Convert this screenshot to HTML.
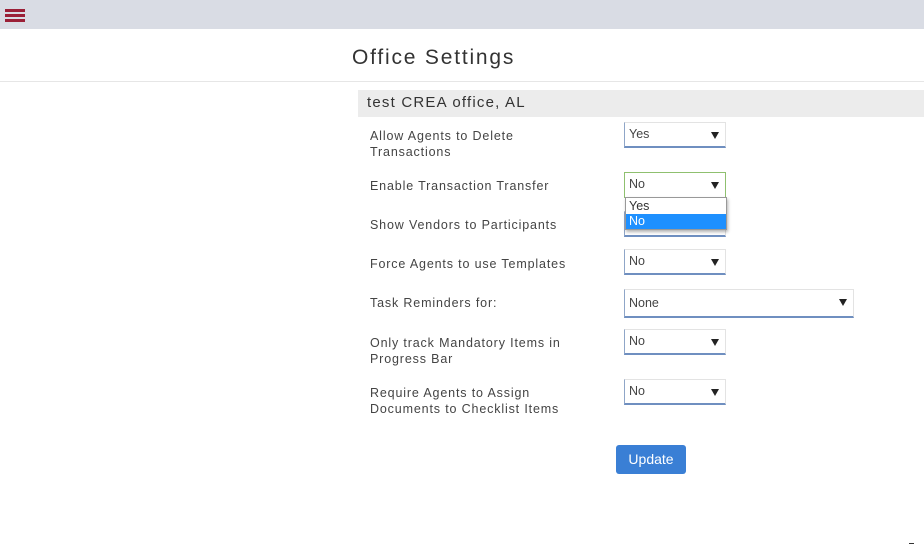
<!DOCTYPE html>
<html><head><meta charset="utf-8"><style>
*{margin:0;padding:0;box-sizing:border-box}
body{width:924px;height:546px;background:#fff;position:relative;overflow:hidden;font-family:"Liberation Sans",sans-serif;color:#333}
.top{position:absolute;left:0;top:0;width:924px;height:29px;background:#d9dce4}
.bar{position:absolute;left:5px;width:20px;height:3px;background:#9b2037}
.hr{position:absolute;left:0;top:81px;width:924px;height:1px;background:#e6e6e6}
h1{position:absolute;left:352px;top:46px;font-size:21px;font-weight:normal;color:#333;letter-spacing:1.8px}
.hd{position:absolute;left:358px;top:90px;width:566px;height:27px;background:#ececec;font-size:15px;padding:4px 0 0 9px;letter-spacing:1.2px}
.lb{position:absolute;left:370px;font-size:12.5px;line-height:16px;color:#444;letter-spacing:.85px}
.sel{position:absolute;left:624px;width:102px;height:26px;border:1px solid #e3e3e3;border-left:1px solid #8fa6c8;border-bottom:2px solid #6f8fc0;font-size:12.5px;padding:4px 0 0 4px;color:#444}
.sel:after{content:"";position:absolute;right:6px;top:9px;border-left:4px solid transparent;border-right:4px solid transparent;border-top:7px solid #222}
.dd{position:absolute;left:625px;top:197px;width:102px;height:33px;border:1px solid #999;background:#fff;box-shadow:1px 2px 3px rgba(0,0,0,.3);font-size:12.5px}
.btn{position:absolute;left:616px;top:445px;width:70px;height:29px;background:#3a7fd5;border-radius:3px;color:#fff;font-size:14px;text-align:center;line-height:28px}
</style></head><body>
<div class="top"><div class="bar" style="top:9px"></div><div class="bar" style="top:14px"></div><div class="bar" style="top:19px"></div></div>
<h1>Office Settings</h1>
<div class="hr"></div>
<div class="hd">test CREA office, AL</div>
<div class="lb" style="top:128px">Allow Agents to Delete<br>Transactions</div>
<div class="sel" style="top:122px">Yes</div>
<div class="lb" style="top:178px">Enable Transaction Transfer</div>
<div class="sel" style="top:172px;border:1px solid #8fc06f">No</div>
<div class="lb" style="top:217px">Show Vendors to Participants</div>
<div class="sel" style="top:211px"></div>
<div class="dd"><div style="padding:1px 3px;height:16px;line-height:14px">Yes</div><div style="background:#1e90ff;color:#fff;padding:0 3px;height:15px;line-height:14px">No</div></div>
<div class="lb" style="top:256px">Force Agents to use Templates</div>
<div class="sel" style="top:249px">No</div>
<div class="lb" style="top:295px">Task Reminders for:</div>
<div class="sel" style="top:289px;width:230px;height:29px;padding-top:6px">None</div>
<div class="lb" style="top:335px">Only track Mandatory Items in<br>Progress Bar</div>
<div class="sel" style="top:329px">No</div>
<div class="lb" style="top:385px">Require Agents to Assign<br>Documents to Checklist Items</div>
<div class="sel" style="top:379px">No</div>
<div class="btn">Update</div>
<div style="position:absolute;left:909px;top:543px;width:5px;height:1px;background:#333"></div>
</body></html>
